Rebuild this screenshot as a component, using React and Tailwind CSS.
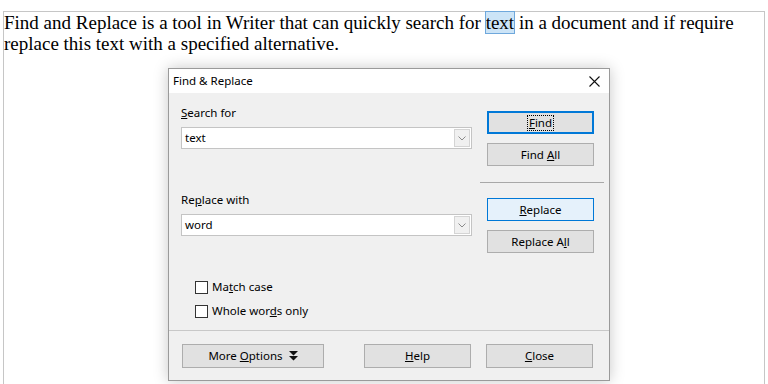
import React from "react";

const ui = { fontFamily: '"Noto Sans", "Open Sans", sans-serif' };

function Btn({ children, className = "", w = "w-[107px]", h = "h-[23px]", variant = "normal" }) {
  const look =
    variant === "focus"
      ? "border-2 border-[#0078d7] bg-[#e1e1e1]"
      : variant === "hover"
      ? "border border-[#0078d7] bg-[#e5f1fb]"
      : "border border-[#adadad] bg-[#e1e1e1]";
  return (
    <div className={`${w} ${h} ${look} flex items-center justify-center text-[11.5px] text-black ${className}`}>
      {children}
    </div>
  );
}

function Combo({ value }) {
  return (
    <div className="h-[22px] w-[291px] flex items-center border border-[#c4c4c4] bg-white">
      <div className="flex-1 pl-[3px] text-[11.5px] leading-none text-black">{value}</div>
      <div className="mr-[1px] h-[18px] w-[16px] flex items-center justify-center border border-[#d4d4d4] bg-[#f0f0f0]">
        <svg width="8" height="5" viewBox="0 0 8 5">
          <path d="M0.5 0.5 L4 4 L7.5 0.5" fill="none" stroke="#8a8a8a" strokeWidth="1" />
        </svg>
      </div>
    </div>
  );
}

function Check({ children }) {
  return (
    <div className="h-[16px] flex items-center gap-[4px] text-[11.5px] text-black">
      <div className="h-[13px] w-[13px] border border-[#333] bg-white" />
      <span>{children}</span>
    </div>
  );
}

export default function App() {
  return (
    <div className="w-[768px] h-[384px] overflow-hidden bg-white px-[3px] pt-[11px]">
      <div className="h-[373px] border-t border-x border-[#c6c6c6]">
        <p
          className="text-[19px] leading-[21px] text-black"
          style={{ fontFamily: '"Liberation Serif", "Times New Roman", serif' }}
        >
          Find and Replace is a tool in Writer that can quickly search for{" "}
          <span className="bg-[#cce4f7] outline outline-1 outline-[#6fa8dc]">text</span> in a
          document and if require replace this text with a specified alternative.
        </p>
        <div
          className="ml-[164px] mt-[14px] w-[442px] border border-[#9a9a9a] bg-[#f0f0f0] shadow-[0_0_14px_rgba(0,0,0,0.22)]"
          style={ui}
        >
          <div className="h-[24px] flex items-center justify-between bg-white pl-[4px] pr-[9px] text-[11.5px] text-black">
            <span>Find &amp; Replace</span>
            <svg width="11" height="11" viewBox="0 0 11 11">
              <path d="M0.5 0.5 L10.5 10.5 M10.5 0.5 L0.5 10.5" stroke="#111" strokeWidth="1.1" />
            </svg>
          </div>
          <div className="flex pl-[12px] pr-[15px]">
            <div className="flex flex-col pt-[12px]">
              <div className="h-[16px] text-[11.5px] leading-[16px] text-black">
                <u>S</u>earch for
              </div>
              <div className="mt-[6px]">
                <Combo value="text" />
              </div>
              <div className="mt-[43px] h-[16px] text-[11.5px] leading-[16px] text-black">
                Re<u>p</u>lace with
              </div>
              <div className="mt-[6px]">
                <Combo value="word" />
              </div>
              <div className="mt-[43px] ml-[14px] flex flex-col gap-[8px]">
                <Check>
                  Ma<u>t</u>ch case
                </Check>
                <Check>
                  Whole wor<u>d</u>s only
                </Check>
              </div>
            </div>
            <div className="ml-[15px] flex flex-col pt-[18px]">
              <Btn variant="focus">
                <span className="border border-dotted border-black px-[1px] leading-[14px]">
                  <u>F</u>ind
                </span>
              </Btn>
              <Btn className="mt-[9px]">
                <span>
                  Find <u>A</u>ll
                </span>
              </Btn>
              <div className="mt-[16px] -ml-[7px] -mr-[10px] h-[1px] bg-[#a8a8a8]" />
              <Btn variant="hover" className="mt-[15px]">
                <span>
                  <u>R</u>eplace
                </span>
              </Btn>
              <Btn className="mt-[9px]">
                <span>
                  Replace A<u>l</u>l
                </span>
              </Btn>
            </div>
          </div>
          <div className="mt-[11px] border-t border-[#c8c8c8]" />
          <div className="flex items-center pl-[13px] pr-[15px] pt-[13px] pb-[12px]">
            <Btn w="w-[142px]" h="h-[24px]" className="gap-[6px]">
              <span>
                More <u>O</u>ptions
              </span>
              <svg width="9" height="10" viewBox="0 0 9 10">
                <path d="M0 0 L9 0 L4.5 4.5 Z M0 5 L9 5 L4.5 9.5 Z" fill="#111" />
              </svg>
            </Btn>
            <Btn h="h-[24px]" className="ml-[40px]">
              <span>
                <u>H</u>elp
              </span>
            </Btn>
            <Btn h="h-[24px]" className="ml-[15px]">
              <span>
                <u>C</u>lose
              </span>
            </Btn>
          </div>
        </div>
      </div>
    </div>
  );
}
